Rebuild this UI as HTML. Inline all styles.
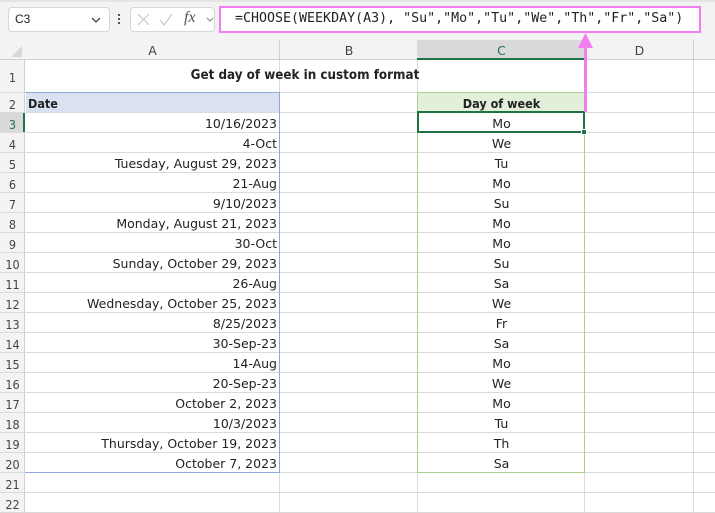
<!DOCTYPE html>
<html><head><meta charset="utf-8"><style>
*{margin:0;padding:0;box-sizing:border-box}
body{width:715px;height:513px;background:#fff;position:relative;overflow:hidden;font-family:"DejaVu Sans","Liberation Sans",sans-serif;font-size:12.5px;color:#222}
.a{position:absolute}
.hl{position:absolute;height:1px;background:#dadada}
.vl{position:absolute;width:1px;background:#dadada}
.rn{position:absolute;left:0;width:25px;text-align:center;color:#444;font-size:12.5px;font-family:"DejaVu Sans Condensed","DejaVu Sans",sans-serif}
.cell{position:absolute;height:20px;line-height:20px;white-space:nowrap}
</style></head><body>
<div class="a" style="left:0;top:0;width:715px;height:40px;background:#f3f3f3"></div>
<div class="a" style="left:0;top:0;width:715px;height:2px;background:#e4e4e4"></div>
<div class="a" style="left:8px;top:7px;width:102px;height:25px;background:#fff;border:1px solid #d6d6d6;border-radius:4px"></div>
<div class="a" style="left:15px;top:12px;font-size:12px;font-family:'Liberation Sans',sans-serif">C3</div>
<svg class="a" style="left:90px;top:15px" width="12" height="10"><path d="M2 3l4 4 4-4" stroke="#444" stroke-width="1.3" fill="none"/></svg>
<div class="a" style="left:118px;top:14px;width:2px;height:2px;background:#555;box-shadow:0 4px 0 #555,0 8px 0 #555"></div>
<div class="a" style="left:130px;top:7px;width:85px;height:25px;background:#fff;border:1px solid #d6d6d6;border-radius:4px"></div>
<svg class="a" style="left:136px;top:12px" width="80" height="16"><path d="M2 2l11 11M13 2L2 13" stroke="#c8c8c8" stroke-width="1.2"/><path d="M24 8l4 5 8-11" stroke="#c8c8c8" stroke-width="1.2" fill="none"/><path d="M71 6l3 3 3-3" stroke="#888" stroke-width="1.1" fill="none"/></svg>
<div class="a" style="left:184px;top:9px;font-family:'Liberation Serif',serif;font-style:italic;font-size:16px;color:#555">fx</div>
<div class="a" style="left:219px;top:6px;width:482px;height:27px;background:#fff;border:2px solid #f37ef2"></div>
<div class="a" style="left:235px;top:11px;font-family:'DejaVu Sans Mono',monospace;font-size:13.3px;color:#222">=CHOOSE(WEEKDAY(A3), "Su","Mo","Tu","We","Th","Fr","Sa")</div>
<div class="a" style="left:0;top:40px;width:715px;height:20px;background:#f3f3f3;border-bottom:1px solid #d0d0d0"></div>
<div class="a" style="left:0;top:60px;width:25px;height:453px;background:#f3f3f3;border-right:1px solid #d0d0d0"></div>
<svg class="a" style="left:10px;top:45px" width="13" height="13"><path d="M12 1V12H1z" fill="#d8d8d8"/></svg>
<div class="a" style="left:417px;top:40px;width:168px;height:20px;background:#d9d9d9;border-bottom:2px solid #217346"></div>
<div class="a" style="left:25px;top:43px;width:255px;text-align:center;color:#444">A</div>
<div class="a" style="left:280px;top:43px;width:138px;text-align:center;color:#444">B</div>
<div class="a" style="left:418px;top:43px;width:167px;text-align:center;color:#217346">C</div>
<div class="a" style="left:585px;top:43px;width:109px;text-align:center;color:#444">D</div>
<div class="vl" style="left:279px;top:40px;height:20px;background:#d0d0d0"></div>
<div class="vl" style="left:693px;top:40px;height:20px;background:#d0d0d0"></div>
<div class="a" style="left:0;top:112px;width:25px;height:20px;background:#d9d9d9;border-right:2px solid #217346"></div>
<div class="vl" style="left:279px;top:60px;height:453px"></div>
<div class="vl" style="left:417px;top:60px;height:453px"></div>
<div class="vl" style="left:584px;top:60px;height:453px"></div>
<div class="vl" style="left:693px;top:60px;height:453px"></div>
<div id="g"></div>
<div class="hl" style="left:0;top:92px;width:715px"></div>
<div class="a" style="left:26px;top:93px;width:253px;height:19px;background:#d9e1f2"></div>
<div class="a" style="left:417px;top:92px;width:168px;height:20px;background:#e2efda;border:1px solid #a9d08e"></div>
<div class="a" style="left:417px;top:112px;width:168px;height:361px;border:1px solid #a9d08e"></div>
<div class="a" style="left:25px;top:92px;width:255px;height:381px;border:1px solid #8eaadb;border-left:none"></div>
<div class="a" style="left:417px;top:111px;width:168px;height:22px;border:2px solid #217346"></div>
<div class="a" style="left:581px;top:129px;width:6px;height:6px;background:#217346;border:1px solid #fff"></div>
<div class="a" style="left:584px;top:46px;width:3px;height:66px;background:#f37ef2"></div>
<svg class="a" style="left:577px;top:33px" width="17" height="16"><path d="M8.5 0L16 15H1z" fill="#f37ef2"/></svg>
<div class="a" style="left:25px;top:68px;width:560px;text-align:center;font-weight:bold;font-family:'DejaVu Sans Condensed','DejaVu Sans',sans-serif;font-size:13.3px">Get day of week in custom format</div>
<div class="cell" style="left:28px;top:94px;font-weight:bold;font-family:'DejaVu Sans Condensed','DejaVu Sans',sans-serif">Date</div>
<div class="cell" style="left:418px;top:94px;width:167px;text-align:center;font-weight:bold;font-family:'DejaVu Sans Condensed','DejaVu Sans',sans-serif">Day of week</div>
<div id="rows"></div>
<script>
var g='';
g+='<div class="rn" style="top:70px">1</div>';
for(var r=2;r<=22;r++){var t=92+(r-2)*20;g+='<div class="hl" style="left:0;top:'+(t+20)+'px;width:715px"></div><div class="rn" style="top:'+(t+5)+'px;'+(r==3?'color:#217346':'')+'">'+r+'</div>';}
document.getElementById('g').innerHTML=g;
var d=[["10/16/2023","Mo"],["4-Oct","We"],["Tuesday, August 29, 2023","Tu"],["21-Aug","Mo"],["9/10/2023","Su"],["Monday, August 21, 2023","Mo"],["30-Oct","Mo"],["Sunday, October 29, 2023","Su"],["26-Aug","Sa"],["Wednesday, October 25, 2023","We"],["8/25/2023","Fr"],["30-Sep-23","Sa"],["14-Aug","Mo"],["20-Sep-23","We"],["October 2, 2023","Mo"],["10/3/2023","Tu"],["Thursday, October 19, 2023","Th"],["October 7, 2023","Sa"]];
var h='';
for(var i=0;i<d.length;i++){var t=114+i*20;h+='<div class="cell" style="left:25px;width:252px;text-align:right;top:'+t+'px">'+d[i][0]+'</div><div class="cell" style="left:418px;width:167px;text-align:center;top:'+t+'px">'+d[i][1]+'</div>';}
document.getElementById('rows').innerHTML=h;
</script>
</body></html>
